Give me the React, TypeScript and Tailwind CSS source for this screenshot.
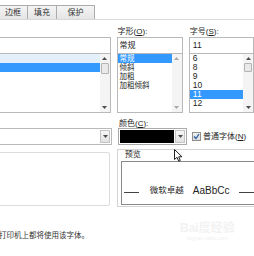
import React from 'react';

function Arrow({ up, color = '#4d4d4d' }: { up?: boolean; color?: string }) {
    return (
        <svg width="5" height="3" viewBox="0 0 5 3">
            <path d={up ? 'M0 3L2.5 0L5 3Z' : 'M0 0L5 0L2.5 3Z'} fill={color} />
        </svg>
    );
}

function ScrollBar({ thumb, dim }: { thumb?: number; dim?: boolean }) {
    const color = dim ? '#a8a8a8' : '#4d4d4d';
    return (
        <div className="w-[10px] flex flex-col bg-[#f4f4f4]">
            <div className="h-[9px] flex items-center justify-center">
                <Arrow up color={color} />
            </div>
            {thumb ? (
                <div
                    className="mx-[1px] border border-[#b4b4b4] bg-[#e9e9e9] rounded-[1px]"
                    style={{ height: thumb }}
                />
            ) : null}
            <div className="flex-1" />
            <div className="h-[9px] flex items-center justify-center">
                <Arrow color={color} />
            </div>
        </div>
    );
}

function Label({ text, keyChar }: { text: string; keyChar: string }) {
    return (
        <div className="mt-[7px] h-[9px] leading-[9px] pl-[1px] text-[8px] text-[#1e1e1e] whitespace-nowrap">
            {text}(<span className="underline">{keyChar}</span>):
        </div>
    );
}

const styles = ['常规', '倾斜', '加粗', '加粗倾斜'];
const sizes = ['6', '8', '9', '10', '11', '12'];

export default function App() {
    return (
        <div className="relative w-[254px] h-[256px] overflow-hidden bg-white font-['Liberation_Sans','Noto_Sans_CJK_SC',sans-serif] text-[#1e1e1e]">
            {/* Tabs */}
            <div className="h-[20px] flex items-end border-b border-[#d9d9d9]">
                <div className="ml-[-2px] w-[30px] h-[14px] border border-b-0 border-[#acacac] bg-gradient-to-b from-[#f4f4f4] to-[#e5e5e5] flex items-center justify-center text-[8px] text-[#333]">
                    边框
                </div>
                <div className="w-[29px] h-[14px] border border-l-0 border-b-0 border-[#acacac] bg-gradient-to-b from-[#f4f4f4] to-[#e5e5e5] flex items-center justify-center text-[8px] text-[#333]">
                    填充
                </div>
                <div className="w-[38px] h-[14px] border border-l-0 border-b-0 border-[#acacac] bg-gradient-to-b from-[#f4f4f4] to-[#e5e5e5] flex items-center justify-center text-[8px] text-[#333]">
                    保护
                </div>
            </div>

            {/* Font / style / size */}
            <div className="flex">
                <div className="ml-[-4px] w-[116px] flex flex-col">
                    <div className="mt-[7px] h-[9px]" />
                    <div className="mt-[1px] h-[17px] border border-[#b9b9b9]" />
                    <div className="h-[59px] border border-t-0 border-[#b9b9b9] flex">
                        <div className="flex-1 flex flex-col">
                            <div className="h-[9px] bg-[#e3effb]" />
                            <div className="h-[9px] bg-[#3399ff]" />
                        </div>
                        <ScrollBar thumb={11} />
                    </div>
                </div>

                <div className="ml-[6px] w-[67px] flex flex-col">
                    <Label text="字形" keyChar="O" />
                    <div className="mt-[1px] h-[17px] border border-[#b9b9b9] flex items-center pl-[2px] text-[8px]">
                        常规
                    </div>
                    <div className="h-[59px] border border-t-0 border-[#b9b9b9] flex">
                        <div className="flex-1 flex flex-col text-[7.5px]">
                            {styles.map((s, i) => (
                                <div
                                    key={s}
                                    className={`h-[9px] leading-[9px] pl-[2px] ${i === 0 ? 'bg-[#3399ff] text-white' : ''}`}
                                >
                                    {s}
                                </div>
                            ))}
                        </div>
                        <ScrollBar dim />
                    </div>
                </div>

                <div className="ml-[6px] w-[66px] flex flex-col">
                    <Label text="字号" keyChar="S" />
                    <div className="mt-[1px] h-[17px] border border-[#b9b9b9] flex items-center pl-[3px] text-[8.5px]">
                        11
                    </div>
                    <div className="h-[59px] border border-t-0 border-[#b9b9b9] flex">
                        <div className="flex-1 flex flex-col text-[8.5px]">
                            {sizes.map((s) => (
                                <div
                                    key={s}
                                    className={`h-[9px] leading-[9px] pl-[3px] ${s === '11' ? 'bg-[#3399ff] text-white' : ''}`}
                                >
                                    {s}
                                </div>
                            ))}
                        </div>
                        <ScrollBar thumb={9} />
                    </div>
                </div>
            </div>

            {/* Underline / colour */}
            <div className="flex">
                <div className="ml-[-4px] w-[116px] flex flex-col">
                    <div className="mt-[6px] h-[9px]" />
                    <div className="h-[17px] border border-[#b9b9b9] flex justify-end items-center pr-[1px]">
                        <div className="w-[10px] h-[13px] border border-[#c4c4c4] bg-gradient-to-b from-[#f6f6f6] to-[#e2e2e2] flex items-center justify-center">
                            <Arrow />
                        </div>
                    </div>
                </div>
                <div className="ml-[6px] flex flex-col">
                    <div className="mt-[6px] h-[9px] leading-[9px] pl-[1px] text-[8px] whitespace-nowrap">
                        颜色(<span className="underline">C</span>):
                    </div>
                    <div className="flex items-center">
                        <div className="w-[69px] h-[17px] border border-[#a9a9a9] flex items-center p-[1px] gap-[1px]">
                            <div className="flex-1 h-[13px] bg-black" />
                            <div className="w-[10px] h-[13px] border border-[#c4c4c4] bg-gradient-to-b from-[#f6f6f6] to-[#e2e2e2] flex items-center justify-center">
                                <Arrow />
                            </div>
                        </div>
                        <div className="ml-[5px] w-[9px] h-[9px] border border-[#8f8f8f] bg-gradient-to-b from-[#f0f0f0] to-[#dcdcdc] flex items-center justify-center">
                            <svg width="7" height="7" viewBox="0 0 7 7">
                                <path d="M1 3.5L3 5.5L6 1" fill="none" stroke="#2a5fa8" strokeWidth="1.3" />
                            </svg>
                        </div>
                        <div className="ml-[2px] text-[8px] whitespace-nowrap">
                            普通字体(<span className="underline">N</span>)
                        </div>
                    </div>
                </div>
            </div>

            {/* Effects / preview */}
            <div className="flex items-start">
                <div className="ml-[-4px] mt-[7px] w-[116px] h-[54px] border border-[#dcdcdc] rounded-[2px]" />
                <div className="ml-[7px] mt-[4px] w-[140px] h-[58px] border border-r-0 border-[#d4d4d4] flex flex-col">
                    <div className="pl-[7px] h-[10px] leading-[10px] text-[8px]">预览</div>
                    <div className="ml-[3px] mt-[1px] h-[44px] border border-r-0 border-[#8a8a8a] flex items-center pt-[14px]">
                        <div className="ml-[2px] w-[15px] h-px bg-[#444] mt-[4px]" />
                        <div className="ml-[11px] text-[8.5px] whitespace-nowrap">微软卓越</div>
                        <div className="ml-[9px] text-[10px] whitespace-nowrap">AaBbCc</div>
                        <div className="ml-[10px] flex-1 h-px bg-[#444] mt-[4px]" />
                    </div>
                </div>
            </div>

            {/* Footnote */}
            <div className="ml-[-1px] mt-[24px] h-[10px] leading-[10px] text-[7.5px] text-[#333] whitespace-nowrap">
                打印机上都将使用该字体。
            </div>

            {/* Watermark */}
            <div className="absolute left-[180px] top-[221px] flex flex-col items-center text-[#f2f2f2] pointer-events-none">
                <div className="text-[12px] font-bold leading-[14px]">Bai度经验</div>
                <div className="text-[5px] leading-[6px]">jingyan.baidu.com</div>
            </div>

            {/* Mouse cursor */}
            <svg className="absolute left-[174px] top-[149px]" width="9" height="13" viewBox="0 0 9 13">
                <path d="M0.5 0.5L0.5 10.5L3 8.3L4.7 12.2L6.3 11.5L4.7 7.8L8 7.8Z" fill="white" stroke="#222" strokeWidth="1" strokeLinejoin="round" />
            </svg>
        </div>
    );
}
